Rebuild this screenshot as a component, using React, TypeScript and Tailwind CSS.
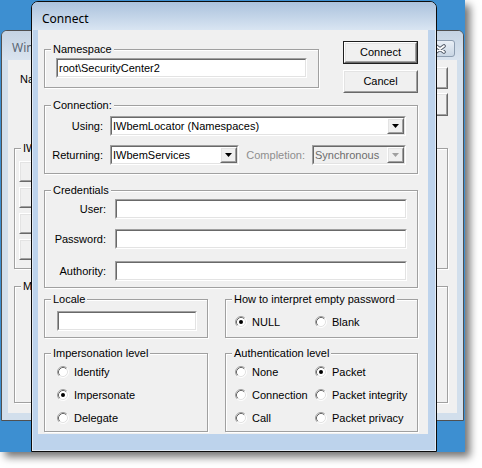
import React from "react";

type WithChildren = { children?: React.ReactNode; className?: string };

function Sunken({ className = "", inner = "", children }: WithChildren & { inner?: string }) {
  return (
    <div className={`border border-t-[#a0a0a0] border-l-[#a0a0a0] border-b-white border-r-white ${className}`}>
      <div className={`h-full border border-t-[#696969] border-l-[#696969] border-b-[#e3e3e3] border-r-[#e3e3e3] ${inner}`}>
        {children}
      </div>
    </div>
  );
}

function Raised({ className = "", inner = "", children }: WithChildren & { inner?: string }) {
  return (
    <div className={`border border-t-white border-l-white border-b-[#696969] border-r-[#696969] ${className}`}>
      <div className={`h-full border border-t-[#e3e3e3] border-l-[#e3e3e3] border-b-[#a0a0a0] border-r-[#a0a0a0] bg-[#f0f0f0] ${inner}`}>
        {children}
      </div>
    </div>
  );
}

function Button({ children, isDefault = false }: WithChildren & { isDefault?: boolean }) {
  if (isDefault) {
    return (
      <div className="h-[23px] border border-[#1e1e1e]">
        <Raised className="h-full" inner="flex items-center justify-center">
          {children}
        </Raised>
      </div>
    );
  }
  return (
    <Raised className="h-[23px]" inner="flex items-center justify-center">
      {children}
    </Raised>
  );
}

function Group({ label, className = "", children }: WithChildren & { label: string }) {
  return (
    <div className={`relative shrink-0 border border-[#a0a0a0] shadow-[inset_1px_1px_0_#ffffff,1px_1px_0_#ffffff] ${className}`}>
      <span className="absolute left-[6px] top-[-7px] whitespace-nowrap bg-[#f0f0f0] px-[2px] leading-[13px]">{label}</span>
      {children}
    </div>
  );
}

function Select({ value, className = "", disabled = false }: { value: string; className?: string; disabled?: boolean }) {
  return (
    <Sunken
      className={`h-[20px] shrink-0 ${className}`}
      inner={`flex items-stretch ${disabled ? "bg-[#f0f0f0] text-[#6d6d6d]" : "bg-white text-black"}`}
    >
      <span className="flex flex-1 items-center overflow-hidden whitespace-nowrap pl-[1px]">{value}</span>
      <Raised className="h-full w-[17px]" inner="flex items-center justify-center">
        <svg width="7" height="4" viewBox="0 0 7 4">
          <polygon points="0,0 7,0 3.5,4" fill={disabled ? "#a0a0a0" : "#000000"} />
        </svg>
      </Raised>
    </Sunken>
  );
}

function TextBox({ value = "", className = "" }: { value?: string; className?: string }) {
  return (
    <Sunken className={`h-[20px] shrink-0 ${className}`} inner="flex items-center bg-white pl-[1px] whitespace-nowrap">
      {value}
    </Sunken>
  );
}

function Radio({ label, checked = false }: { label: string; checked?: boolean }) {
  return (
    <div className="flex h-[16px] items-center whitespace-nowrap">
      <svg width="12" height="12" viewBox="0 0 12 12" className="mr-[5px] shrink-0">
        <circle cx="6" cy="6" r="5" fill="#ffffff" />
        <path d="M2.11 9.89 A5.5 5.5 0 0 1 9.89 2.11" fill="none" stroke="#a0a0a0" strokeWidth="1" />
        <path d="M9.89 2.11 A5.5 5.5 0 0 1 2.11 9.89" fill="none" stroke="#ffffff" strokeWidth="1" />
        <path d="M2.82 9.18 A4.5 4.5 0 0 1 9.18 2.82" fill="none" stroke="#696969" strokeWidth="1" />
        <path d="M9.18 2.82 A4.5 4.5 0 0 1 2.82 9.18" fill="none" stroke="#e3e3e3" strokeWidth="1" />
        {checked && <circle cx="6" cy="6" r="2" fill="#000000" />}
      </svg>
      <span>{label}</span>
    </div>
  );
}

function BgWindow() {
  return (
    <div className="absolute left-[1px] top-[30px] flex h-[391px] w-[463px] flex-col rounded-t-[6px] border border-[#505050] bg-[#d2dfec]">
      <div className="flex h-[29px] shrink-0 rounded-t-[5px] bg-gradient-to-b from-[#c4d3e3] to-[#dae4ef]">
        <span className="whitespace-nowrap pl-[10px] pt-[9px] font-['Noto_Sans',sans-serif] text-[12px] leading-[16px] text-[#5a6674]">
          Windows Management Instrumentation Tester
        </span>
        <div className="ml-auto mr-[8px] mt-[9px] flex h-[17px] w-[32px] items-center justify-start rounded-[3px] border border-[#8d9db0] bg-gradient-to-b from-[#e9eff6] to-[#c9d6e4] pl-[10px]">
          <svg width="12" height="10" viewBox="0 0 12 10">
            <path d="M2 2 L10 8 M10 2 L2 8" stroke="#4f5866" strokeWidth="3.6" strokeLinecap="round" fill="none" />
            <path d="M2 2 L10 8 M10 2 L2 8" stroke="#ffffff" strokeWidth="1.8" strokeLinecap="round" fill="none" />
          </svg>
        </div>
      </div>
      <div className="flex-1 px-[6px] pb-[7px]">
        <div className="flex h-full flex-col bg-[#f0f0f0]">
          <div className="flex h-[88px] shrink-0 items-start">
            <span className="ml-[12px] mt-[13px]">Namespace:</span>
            <div className="ml-auto mr-[9px] mt-[7px] flex w-[75px] flex-col gap-[4px]">
              <Raised className="h-[22px]" />
              <Raised className="h-[23px]" />
            </div>
          </div>
          <Group label="IWbemServices" className="ml-[6px] mr-[9px] h-[121px] pl-[4px] pt-[12px]">
            <div className="flex w-[110px] flex-col gap-[5px]">
              <Raised className="h-[21px]" />
              <Raised className="h-[21px]" />
              <Raised className="h-[21px]" />
              <Raised className="h-[21px]" />
            </div>
          </Group>
          <Group label="Method Options" className="ml-[6px] mr-[9px] mt-[17px] h-[117px]">
            <div />
          </Group>
        </div>
      </div>
    </div>
  );
}

function Dialog() {
  return (
    <div className="absolute left-[31px] top-[1px] flex h-[451px] w-[406px] flex-col rounded-t-[7px] border border-[#0c0c0c] bg-[#bdd3ec] shadow-[inset_1px_1px_0_rgba(255,255,255,0.55),inset_-1px_-1px_0_rgba(255,255,255,0.55)]">
      <div className="h-[28px] shrink-0 rounded-t-[6px] bg-gradient-to-b from-[#abc2dd] to-[#d9e5f2] pl-[10px] pt-[9px] font-['Noto_Sans',sans-serif] text-[12px] leading-[16px] text-black">
        Connect
      </div>
      <div className="ml-[6px] flex h-[404px] w-[390px] shrink-0 flex-col bg-[#f0f0f0] pl-[6px]">
        <div className="flex h-[75px] shrink-0 items-start">
          <Group label="Namespace" className="mt-[19px] h-[39px] w-[275px] px-[11px] pt-[8px]">
            <TextBox value="root\SecurityCenter2" className="w-full" />
          </Group>
          <div className="ml-[24px] mt-[11px] flex w-[75px] flex-col gap-[6px]">
            <Button isDefault>Connect</Button>
            <Button>Cancel</Button>
          </div>
        </div>

        <Group label="Connection:" className="flex h-[69px] w-[374px] flex-col gap-[9px] pr-[11px] pt-[10px]">
          <div className="flex h-[20px] items-center">
            <span className="w-[58px] text-right">Using:</span>
            <Select value="IWbemLocator (Namespaces)" className="ml-[7px] w-[296px]" />
          </div>
          <div className="flex h-[20px] items-center">
            <span className="w-[58px] text-right">Returning:</span>
            <Select value="IWbemServices" className="ml-[7px] w-[129px]" />
            <span className="ml-auto text-[#8e8e8e]">Completion:</span>
            <Select value="Synchronous" disabled className="ml-[7px] w-[94px]" />
          </div>
        </Group>

        <Group label="Credentials" className="mt-[16px] flex h-[98px] w-[374px] flex-col pr-[10px] pt-[8px]">
          <div className="flex h-[20px] items-center">
            <span className="w-[61px] text-right">User:</span>
            <TextBox className="ml-[9px] w-[292px]" />
          </div>
          <div className="mt-[10px] flex h-[20px] items-center">
            <span className="w-[61px] text-right">Password:</span>
            <TextBox className="ml-[9px] w-[292px]" />
          </div>
          <div className="mt-[12px] flex h-[20px] items-center">
            <span className="w-[61px] text-right">Authority:</span>
            <TextBox className="ml-[9px] w-[292px]" />
          </div>
        </Group>

        <div className="mt-[11px] flex shrink-0">
          <Group label="Locale" className="h-[39px] w-[164px] pl-[12px] pt-[11px]">
            <TextBox className="w-[140px]" />
          </Group>
          <Group label="How to interpret empty password" className="ml-[17px] grid h-[39px] w-[193px] grid-cols-[80px_auto] pl-[9px] pt-[14px]">
            <Radio label="NULL" checked />
            <Radio label="Blank" />
          </Group>
        </div>

        <div className="mt-[15px] flex shrink-0">
          <Group label="Impersonation level" className="flex h-[79px] w-[164px] flex-col gap-[7px] pl-[12px] pt-[10px]">
            <Radio label="Identify" />
            <Radio label="Impersonate" checked />
            <Radio label="Delegate" />
          </Group>
          <Group label="Authentication level" className="ml-[17px] grid h-[79px] w-[193px] grid-cols-[80px_auto] content-start gap-y-[7px] pl-[9px] pt-[10px]">
            <Radio label="None" />
            <Radio label="Packet" checked />
            <Radio label="Connection" />
            <Radio label="Packet integrity" />
            <Radio label="Call" />
            <Radio label="Packet privacy" />
          </Group>
        </div>
      </div>
    </div>
  );
}

export default function App() {
  return (
    <div className="h-[468px] w-[482px] overflow-hidden bg-white font-['Liberation_Sans',Arial,sans-serif] text-[11px] leading-[13px] text-black">
      <div className="relative h-[452px] w-[465px] bg-[#3d8fd1] shadow-[5px_5px_8px_rgba(0,0,0,0.55)]">
        <BgWindow />
        <Dialog />
      </div>
    </div>
  );
}
